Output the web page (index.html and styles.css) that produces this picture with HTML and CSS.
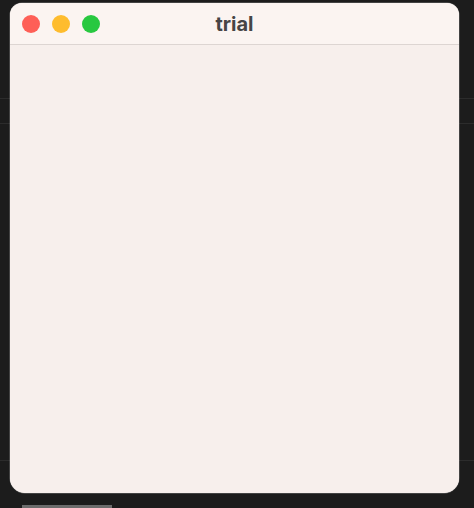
FILE: index.html
```html
<!DOCTYPE html>
<html>
<head>
<meta charset="utf-8">
<link rel="stylesheet" href="styles.css">
</head>
<body>
<div class="screen">
  <div class="bgline l1"></div>
  <div class="bgline l2"></div>
  <div class="bgline l3"></div>
  <div class="behind-text">Terminal</div>
  <div class="tab"></div>
  <div class="window">
    <div class="titlebar">
      <div class="lights">
        <span class="light red"></span>
        <span class="light yellow"></span>
        <span class="light green"></span>
      </div>
      <div class="title">trial</div>
    </div>
    <div class="content"></div>
  </div>
</div>
</body>
</html>
```
FILE: styles.css
```css
html, body {
  margin: 0;
  padding: 0;
  background: #1c1c1c;
}
.screen {
  position: relative;
  width: 474px;
  height: 508px;
  background: #1c1c1c;
  overflow: hidden;
  font-family: "Inter", "Liberation Sans", sans-serif;
}
.bgline {
  position: absolute;
  left: 0;
  right: 0;
  height: 1px;
  background: #2c2c2c;
}
.l1 { top: 98px; }
.l2 { top: 123px; }
.l3 { top: 460px; }
.behind-text {
  position: absolute;
  left: 28px;
  top: 477px;
  font-size: 14px;
  color: #d8d8d8;
}
.tab {
  position: absolute;
  left: 22px;
  top: 505px;
  width: 90px;
  height: 3px;
  background: #6c6c6c;
}
.window {
  position: absolute;
  left: 10px;
  top: 3px;
  width: 449px;
  height: 490px;
  border-radius: 12px 12px 15px 15px;
  overflow: hidden;
  background: #f7efec;
  box-shadow: 0 0 0 0.5px rgba(255,255,255,0.35);
  display: flex;
  flex-direction: column;
}
.titlebar {
  position: relative;
  height: 41px;
  flex: none;
  background: #fbf4f1;
  border-bottom: 1px solid #ddd5d2;
  display: flex;
  align-items: center;
  justify-content: center;
}
.lights {
  position: absolute;
  left: 12px;
  top: 12px;
  display: flex;
  gap: 12px;
}
.light {
  width: 18px;
  height: 18px;
  border-radius: 50%;
  display: block;
}
.red { background: #fe5f57; }
.yellow { background: #febc2e; }
.green { background: #28c840; }
.title {
  font-size: 20px;
  font-weight: 700;
  color: #474545;
  margin-top: 0;
  margin-left: 0;
}
.content {
  flex: 1;
  background: #f7efec;
}
```
